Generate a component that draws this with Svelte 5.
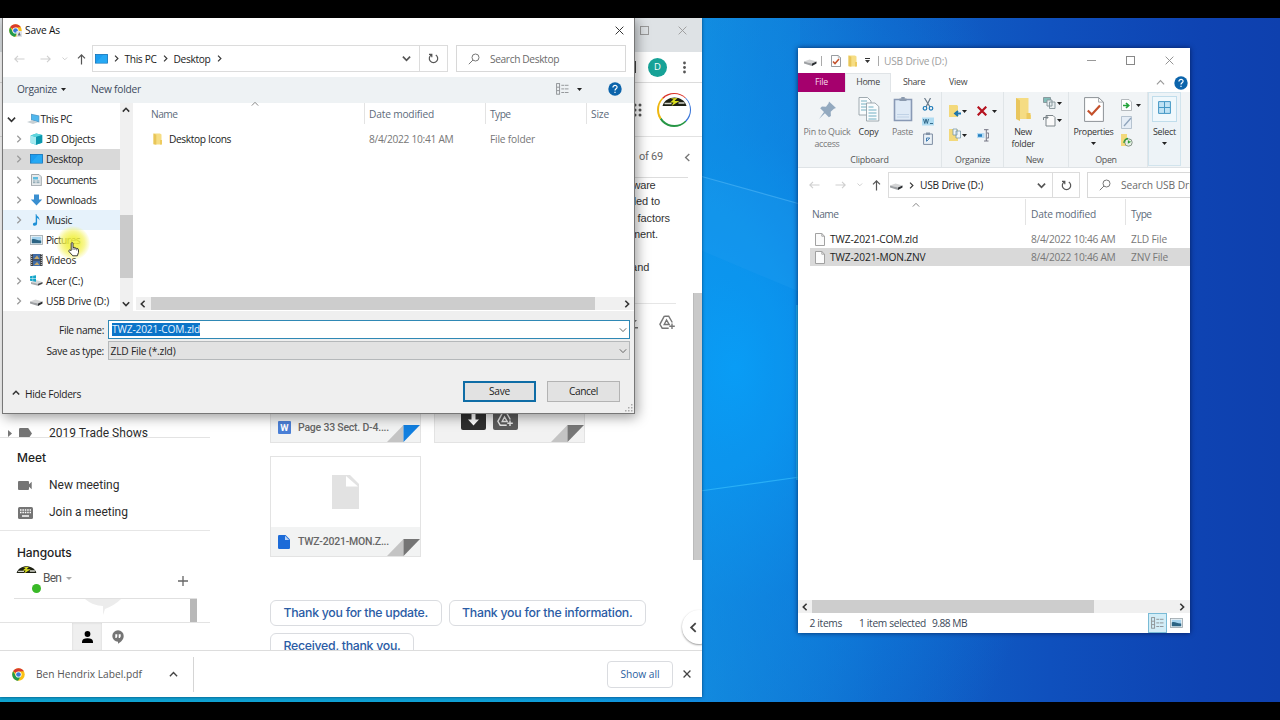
<script>
  // Spreads a label's letters so that it takes the given width in pixels.
  function fit(node, width) {
    const natural = node.getBoundingClientRect().width;
    node.style.letterSpacing = (width - natural) / node.textContent.length + 'px';
  }

  const tree = [
    { icon: 'cube', label: '3D Objects', w: 49 },
    { icon: 'monitor', label: 'Desktop', w: 37, state: 'selected' },
    { icon: 'document', label: 'Documents', w: 50.5 },
    { icon: 'down', label: 'Downloads', w: 50.5 },
    { icon: 'music', label: 'Music', w: 26, state: 'hover' },
    { icon: 'picture', label: 'Pictures', w: 34 },
    { icon: 'video', label: 'Videos', w: 30 },
    { icon: 'windrive', label: 'Acer (C:)', w: 37 },
    { icon: 'drive', label: 'USB Drive (D:)', w: 63 }
  ];

  const files = [
    { name: 'TWZ-2021-COM.zld', w: 88, type: 'ZLD File', tw: 36 },
    { name: 'TWZ-2021-MON.ZNV', w: 95.5, type: 'ZNV File', tw: 37, selected: true }
  ];

  const message = [
    { text: 'ware', w: 23, x: 632.5 },
    { text: 'ded to', w: 30, x: 630 },
    { text: 'factors', w: 32.5, x: 637.5 },
    { text: 'ment.', w: 27, x: 631 },
    { text: '', w: 0, x: 630 },
    { text: 'and', w: 18.5, x: 631 }
  ];
</script>

{#snippet t(text, w, cls = '')}<span class="t {cls}" use:fit={w}>{text}</span>{/snippet}

{#snippet chev(dir, size = 7, color = '#333', sw = 1.3)}
  <svg class="i" width={size} height={size} viewBox="0 0 8 8" fill="none" stroke={color} stroke-width={sw}>
    {#if dir === 'right'}<path d="M2.3 .8 5.6 4 2.3 7.2" />
    {:else if dir === 'left'}<path d="M5.6 .8 2.3 4 5.6 7.2" />
    {:else if dir === 'up'}<path d="M.8 5.6 4 2.3 7.2 5.6" />
    {:else}<path d="M.8 2.3 4 5.6 7.2 2.3" />{/if}
  </svg>
{/snippet}

{#snippet caret(color = '#222')}
  <svg class="i" width="5" height="3" viewBox="0 0 5 3"><path d="M0 0h5L2.5 3z" fill={color} /></svg>
{/snippet}

{#snippet cross(size, color, sw = 1)}
  <svg class="i" width={size} height={size} viewBox="0 0 10 10" stroke={color} stroke-width={sw}><path d="M.7.7 9.3 9.3M9.3.7.7 9.3" /></svg>
{/snippet}

{#snippet chrome(badge = false)}
  <svg class="i" width="13" height="13" viewBox="0 0 26 26">
    <circle cx="13" cy="13" r="12.5" fill="#fbc116" />
    <path d="M13 13 2.2 6.7A12.5 12.5 0 0 1 23.8 6.7L13 7z" fill="#d93a2e" />
    <path d="M13 13 7.8 16 2.2 6.7A12.5 12.5 0 0 0 12 25.5L18 16z" fill="#229a4b" />
    <circle cx="13" cy="13" r="6.2" fill="#fff" /><circle cx="13" cy="13" r="4.7" fill="#3b78d8" />
    {#if badge}<rect x="15" y="14" width="11" height="12" fill="#dfe3e8" /><path d="M20.500 16 23.500 23h-6z" fill="#667" />{/if}
  </svg>
{/snippet}

{#snippet icon(name)}
  {#if name === 'drive'}
    <svg class="i" width="13" height="12" viewBox="0 0 13 12"><path d="M0 6.500 5.500 4.500 12.500 6.500 8 8.500z" fill="#d3d4d5" /><path d="M0 6.500 8 8.500v2.500L0 8.500z" fill="#9ea1a4" /><path d="M8 8.500 12.500 6.500v2L8 11z" fill="#2b2e31" /></svg>
  {:else if name === 'windrive'}
    <svg class="i" width="13" height="12" viewBox="0 0 13 12"><path d="M1 7 6 5 12.500 7 8 8.800z" fill="#d5d8da" /><path d="M1 7 8 8.800v2L1 9z" fill="#a9adb0" /><path d="M8 8.800 12.500 7v1.700L8 10.800z" fill="#484b4e" /><path d="M0 1.300 2.700.8v2.500H0zM3.100.8 6 .3v3H3.100zM0 3.700h2.700v2.500L0 5.700zM3.100 3.700H6v3L3.100 6.200z" fill="#12a5c9" /></svg>
  {:else if name === 'monitor'}
    <svg class="i" width="13" height="12" viewBox="0 0 13 12"><rect x=".5" y="1.500" width="12" height="8.600" fill="#1b9df0" stroke="#0e72b8" stroke-width=".8" /><path d="M1 10 8 2h4v8z" fill="#2eb0f7" opacity=".6" /></svg>
  {:else if name === 'pc'}
    <svg class="i" width="13" height="12" viewBox="0 0 13 12"><path d="M4 .8 12.300 2.500v7L4 7.200z" fill="#5b9fc9" /><path d="M4.800 1.800 11.500 3.200v5L4.800 6.500z" fill="#4fb7ee" /><path d="M0 9 5 7.300l6 2L6 11z" fill="#c8d0d4" /></svg>
  {:else if name === 'cube'}
    <svg class="i" width="13" height="12" viewBox="0 0 13 12"><path d="M.7 2.500 6.300.5l5.900 1.500v7.800L6 11.800.7 10z" fill="#19b3c7" /><path d="M.7 2.500 6 4v7.800L.7 10z" fill="#a5eaf0" /><path d="M.7 2.500 6.300.5l5.900 1.500L6 4z" fill="#5ed5dd" /><path d="M6 4l6.200-2v7.800L6 11.800z" fill="#0c97ad" /></svg>
  {:else if name === 'document'}
    <svg class="i" width="13" height="12" viewBox="0 0 13 12"><path d="M1.500.5h7.500l2.300 2.300v8.900H1.500z" fill="#e6eaec" stroke="#8a9499" stroke-width=".8" /><path d="M3 3h5v2.500H3z" fill="#5dbce0" /><path d="M3 7h2.500M3 8.700h2.500M6.500 7h3M6.500 8.700h3" stroke="#7797a5" stroke-width=".9" /></svg>
  {:else if name === 'down'}
    <svg class="i" width="13" height="12" viewBox="0 0 13 12"><path d="M4 .5h5v5h3.200L6.500 11.500.8 5.500H4z" fill="#3a8fd0" /></svg>
  {:else if name === 'music'}
    <svg class="i" width="13" height="12" viewBox="0 0 13 12"><path d="M6.300 0c.3 2.500 3.700 2.600 3 6.400-.3-1.500-1.400-2.200-2.200-2.500v5.700c0 2.700-4.200 2.900-4.200.7 0-1.500 1.700-2.200 2.800-1.800V0z" fill="#1e90d6" /></svg>
  {:else if name === 'picture'}
    <svg class="i" width="13" height="12" viewBox="0 0 13 12"><rect x=".5" y="1.500" width="12" height="9" fill="#eef2f4" stroke="#9aa5ab" stroke-width=".8" /><path d="M1.800 2.800h9.400v6.400H1.800z" fill="#a5d3ee" /><path d="M1.800 5.500c3-1.300 5 1.200 9.400 1v2.700H1.800z" fill="#2c6484" /></svg>
  {:else if name === 'video'}
    <svg class="i" width="13" height="12" viewBox="0 0 13 12"><rect x=".5" y="0" width="12" height="12" fill="#3b3f44" /><path d="M3 0h7v5.600H3zM3 6.400h7V12H3z" fill="#3f6ba6" /><path d="M4 5 7 1.500 9.500 5zM4 11l3-3 2.500 3z" fill="#c5a86a" /><path d="M1.700 0v12M11.300 0v12" stroke="#dfe3e6" stroke-dasharray="1 1" stroke-width=".9" /></svg>
  {:else if name === 'folder'}
    <svg class="i" width="9" height="12" viewBox="0 0 9 12"><path d="M.5.500h6.500l1.500 1v10H.5z" fill="#f6dd84" /><path d="M.5.500 3.300 1.700V11.700L.5 11z" fill="#e8c559" /><path d="M7 7h2v4.500H7z" fill="#eecb60" /></svg>
  {:else if name === 'file'}
    <svg class="i" width="10" height="13" viewBox="0 0 10 13"><path d="M.5.500h6.300l2.700 2.700v9.300H.5z" fill="#fbfbfb" stroke="#979797" stroke-width=".9" /><path d="M6.800.5v2.700h2.700" fill="none" stroke="#979797" stroke-width=".8" /></svg>
  {:else if name === 'search'}
    <svg class="i" width="12" height="12" viewBox="0 0 12 12" fill="none" stroke="#777" stroke-width="1"><circle cx="7.500" cy="4.500" r="3.500" /><path d="M5 7 .8 11.200" /></svg>
  {:else if name === 'refresh'}
    <svg class="i" width="11" height="11" viewBox="0 0 11 11" fill="none" stroke="#555" stroke-width="1.200"><path d="M7.800 1.900A4.200 4.200 0 1 1 3.200 1.900M3.800 4.200V1.300H1" /></svg>
  {:else if name === 'help'}
    <svg class="i" width="14" height="14" viewBox="0 0 14 14"><circle cx="7" cy="7" r="6.700" fill="#0c64ab" /><path d="M4.900 5.500c0-2.900 4.300-2.700 4.200-.2C9 6.800 7 6.900 7 8.500M7 9.700v1.400" stroke="#fff" stroke-width="1.200" fill="none" /></svg>
  {:else if name === 'arrows'}
    <svg class="i" width="74" height="12" viewBox="0 0 74 12" fill="none" stroke="#cfcfcf" stroke-width="1.100"><path d="M10.500 6H.8M4 2.800.8 6 4 9.200M26.500 6h9.700M33 2.800 36.200 6 33 9.200" /><path d="M48.500 4.500l2.300 2.300 2.300-2.300" stroke-width="1" /><path d="M67.500 11.500V1.800M64 5.300 67.500 1.800 71 5.300" stroke="#555" stroke-width="1.200" /></svg>
  {:else if name === 'details'}
    <svg class="i" width="13" height="12" viewBox="0 0 13 12" fill="none" stroke="#8b8f92" stroke-width=".9"><rect x=".6" y=".6" width="3" height="10.600" /><path d="M1 4.200h2.500M1 7.600h2.500M5.300 2.300h3M9 2.300h3.500M5.300 5.900h3M9 5.900h3.500M5.300 9.500h3M9 9.500h3.500" /></svg>
  {:else if name === 'check'}
    <svg class="i" width="10" height="12" viewBox="0 0 20 24"><path d="M1 1h13.500L19 5.500V23H1z" fill="#fdfdfd" stroke="#777c82" stroke-width="1.500" /><path d="M14.500 1v4.500H19" fill="none" stroke="#8c9196" /><path d="m4 13 4 4.200L16 8" fill="none" stroke="#c4502b" stroke-width="3" /></svg>
  {:else if name === 'drivesave'}
    <svg class="i" width="17" height="15" viewBox="0 0 17 15" fill="none" stroke="currentColor" stroke-width="1.400"><path d="M5.300 1.200h4.400l3.600 6.300M5.300 1.200.9 9.300l2.300 3.900h6.500M7.500 5 5.200 9.500h5L7.500 5z" /><path d="M13 8.500v5.500M10.300 11.200h5.500" /></svg>
  {/if}
{/snippet}

{#snippet logo(w)}
  <svg class="i" width={w} height={w * 0.36} viewBox="0 0 24 9"><path d="M0 9C3-2.500 21-2.500 24 9z" fill="#1d2014" /><path d="M2 6.500h7M16 6h6" stroke="#d6d6cc" stroke-width="1.600" /><path d="M8 1.500 15 1l-3 3h5L9 9l2-3.500H7.500L11 2.500z" fill="#dbe020" /></svg>
{/snippet}

{#snippet corner(color)}
  <svg class="corner" width="33" height="17" viewBox="0 0 33 17"><path d="M0 17 16.500 0v17z" fill="#c4c4c4" /><path d="M16.500 0H33L16.500 17z" fill={color} /></svg>
{/snippet}

<div class="screen">
  <div class="desktop">
    <svg class="beams" width="1280" height="684" viewBox="0 18 1280 684">
      <path d="M700 176 800 204V292L700 250z" fill="#37a8f5" opacity=".16" />
      <path d="M700 491 800 477V18L700 18z" fill="#0aa6ff" opacity=".10" />
      <path d="M700 176 800 204" stroke="#55baf8" stroke-width="1.200" opacity=".55" />
      <path d="M700 491 800 477" stroke="#3dc4ff" stroke-width="1.200" opacity=".6" />
      <path d="M797 305V480" stroke="#32d0ff" stroke-width="1.500" opacity=".8" />
    </svg>

    <!-- Browser -->
    <section class="browser">
      <div class="strip">
        <svg class="i" width="9" height="9" viewBox="0 0 9 9"><rect x=".5" y=".5" width="8" height="8" fill="none" stroke="#999" /></svg>
        {@render cross(9, '#999')}
      </div>
      <div class="tools">
        <i class="ext"></i>
        <span class="face">{@render t('D', 7)}</span>
        <svg class="i" width="3" height="13" viewBox="0 0 3 13" fill="#555"><circle cx="1.500" cy="2" r="1.400" /><circle cx="1.500" cy="6.500" r="1.400" /><circle cx="1.500" cy="11" r="1.400" /></svg>
      </div>
      <div class="mailhead">
        <svg class="i" width="14" height="14" viewBox="0 0 14 14" fill="#555">
          {#each [2, 7, 12] as y}{#each [2, 7, 12] as x}<circle cx={x} cy={y} r="1.500" />{/each}{/each}
        </svg>
        <span class="ring"><span class="inner">{@render logo(25)}</span></span>
      </div>
      <div class="main">
        <aside>
          <div class="labels">
            <div class="label">
              <svg class="i" width="4" height="7" viewBox="0 0 4 7"><path d="M0 0l4 3.500L0 7z" fill="#777" /></svg>
              <svg class="i" width="13" height="11" viewBox="0 0 13 11"><path d="M1.200 0h8L13 5.500 9.200 11h-8Q0 11 0 9.800V1.200Q0 0 1.200 0z" fill="#757575" /></svg>
              {@render t('2019 Trade Shows', 99)}
            </div>
          </div>
          <div class="meet">
            <h3>{@render t('Meet', 29)}</h3>
            <div class="entry">
              <svg class="i" width="15" height="9" viewBox="0 0 15 9"><path d="M1 0h9q1 0 1 1v2.300L13.700.8v7.400L11 5.700V8q0 1-1 1H1Q0 9 0 8V1q0-1 1-1z" fill="#757575" /></svg>
              {@render t('New meeting', 70.5)}
            </div>
            <div class="entry">
              <svg class="i" width="15" height="12" viewBox="0 0 15 12"><rect width="15" height="12" rx="1.500" fill="#757575" /><path d="M2 3h11M2 5.500h11" stroke="#fff" stroke-width="1.400" stroke-dasharray="1.500 .9" /><path d="M4 9h7" stroke="#fff" stroke-width="1.500" /></svg>
              {@render t('Join a meeting', 79)}
            </div>
          </div>
          <div class="hangouts">
            <h3>{@render t('Hangouts', 54.5)}</h3>
            <div class="person">
              <span class="pic">{@render logo(21)}<i class="online"></i></span>
              {@render t('Ben', 18)}
              <svg class="i" width="6" height="3" viewBox="0 0 6 3"><path d="M0 0h6L3 3z" fill="#aaa" /></svg>
              <svg class="i plus" width="10" height="10" viewBox="0 0 10 10"><path d="M5 0v10M0 5h10" stroke="#666" stroke-width="1.300" /></svg>
            </div>
            <div class="chats">
              <svg class="i" width="36" height="17" viewBox="0 0 36 17"><path d="M0 0h36Q30 6 20 10L18 16V7Q8 7 0 0z" fill="#ececec" /></svg>
              <i class="bar"></i>
            </div>
          </div>
          <div class="tabs">
            <span class="tab on"><svg class="i" width="11" height="12" viewBox="0 0 11 12"><circle cx="5.500" cy="3" r="2.900" /><path d="M0 12V10.500Q.5 7.300 5.500 7.300T11 10.500V12z" /></svg></span>
            <span class="tab"><svg class="i" width="12" height="14" viewBox="0 0 12 14"><path d="M6 .3a5.600 5.600 0 0 1 5.700 5.700C11.700 9.500 9 12 6 13.700v-2A5.700 5.700 0 0 1 6 .3z" fill="#757575" /><path d="M3.300 4.300h2v2.200L4.500 8H3.300zM6.700 4.300h2v2.200L7.900 8H6.700z" fill="#fff" /></svg></span>
          </div>
        </aside>

        <article>
          <div class="pager">{@render t('of 69', 24)}<div class="fold">{@render chev('left', 9, '#777', 1.2)}</div></div>
          <div class="message">
            {#each message as line}
              <p style="padding-left: {line.x - 210}px">{#if line.text}{@render t(line.text, line.w)}{/if}</p>
            {/each}
          </div>
          <div class="attachhead">
            <svg class="i" width="11" height="13" viewBox="0 0 11 13"><path d="M4 0h3v4h3L5.500 9 1 4h3zM0 11h11v1.500H0z" fill="#777" /></svg>
            {@render icon('drivesave')}
          </div>
          <div class="cards">
            <div class="card">
              <div class="preview"></div>
              <div class="caption">
                <span class="word">W</span>{@render t('Page 33 Sect. D-4....', 91)}{@render corner('#117fe0')}
              </div>
            </div>
            <div class="card hovered">
              <div class="preview actions">
                <span class="act dark"><svg class="i" width="11" height="12" viewBox="0 0 11 12"><path d="M3.500 0h4v5.500H11L5.500 11.500 0 5.500h3.500z" fill="#fff" /></svg></span>
                <span class="act">{@render icon('drivesave')}</span>
              </div>
              <div class="caption">{@render corner('#777')}</div>
            </div>
            <div class="card">
              <div class="preview"><svg class="i" width="27" height="34" viewBox="0 0 27 34"><path d="M0 0h18l9 9v25H0z" fill="#e2e2e2" /><path d="M14 1v10.500h12z" fill="#fff" /></svg></div>
              <div class="caption">
                <svg class="i fileglyph" width="12" height="14" viewBox="0 0 12 14"><path d="M1.200 0H7.500L12 4.500V12.800Q12 14 10.800 14H1.200Q0 14 0 12.800V1.200Q0 0 1.200 0z" fill="#1c6bd8" /><path d="M7 .8V5h4.200z" fill="#b9d3f7" /></svg>
                {@render t('TWZ-2021-MON.Z...', 91)}{@render corner('#757575')}
              </div>
            </div>
          </div>
          <div class="replies">
            <button>{@render t('Thank you for the update.', 144.5)}</button>
            <button>{@render t('Thank you for the information.', 170.5)}</button>
            <button>{@render t('Received, thank you.', 117)}</button>
          </div>
        </article>
        <div class="vscroll"><i></i></div>
        <span class="panel">{@render chev('left', 11, '#444', 1.3)}</span>
      </div>
      <div class="downloads">
        <div class="download">{@render chrome()}{@render t('Ben Hendrix Label.pdf', 106)}<div class="more">{@render chev('up', 9, '#444', 1.2)}</div></div>
        <button>{@render t('Show all', 39)}</button>
        {@render cross(8, '#444', 1.6)}
      </div>
    </section>

    <!-- Save dialog -->
    <section class="dialog">
      <div class="dtitle">{@render chrome(true)}{@render t('Save As', 35)}<div class="close">{@render cross(9, '#333', 1.1)}</div></div>
      <div class="dnav">
        <span class="nav">{@render icon('arrows')}</span>
        <div class="address">
          {@render icon('monitor')}<b></b>{@render chev('right')}<b></b>{@render t('This PC', 32)}<b></b>{@render chev('right')}<b></b>{@render t('Desktop', 37)}<b></b>{@render chev('right')}
          <span class="end">{@render chev('down', 9, '#555', 1.5)}</span>
          <span class="reload">{@render icon('refresh')}</span>
        </div>
        <div class="search">{@render icon('search')}{@render t('Search Desktop', 69)}</div>
      </div>
      <div class="dbar">
        {@render t('Organize', 40)}<span class="c1">{@render caret()}</span>{@render t('New folder', 50)}
        <span class="view">{@render icon('details')}{@render caret()}{@render icon('help')}</span>
      </div>
      <div class="dbody">
        <div class="tree">
          <div class="node root">{@render chev('down', 9, '#333', 1.4)}{@render icon('pc')}{@render t('This PC', 31.5)}</div>
          {#each tree as n}
            <div class="node {n.state ?? ''}">{@render chev('right', 8, '#999', 1.2)}{@render icon(n.icon)}{@render t(n.label, n.w)}</div>
          {/each}
        </div>
        <div class="tscroll">{@render chev('up', 8, '#333', 1.6)}<i></i>{@render chev('down', 8, '#333', 1.6)}</div>
        <div class="dlist">
          <div class="cols">
            <div class="cell">{@render t('Name', 26.5)}</div><div class="cell">{@render t('Date modified', 65)}</div><div class="cell">{@render t('Type', 20.5)}</div><div class="cell">{@render t('Size', 18)}</div>
            <em>{@render chev('up', 8, '#888', 1)}</em>
          </div>
          <div class="row"><div>{@render icon('folder')}{@render t('Desktop Icons', 62, 'black')}</div><div>{@render t('8/4/2022 10:41 AM', 84.5)}</div><div>{@render t('File folder', 45)}</div></div>
          <div class="hscroll">{@render chev('left', 8, '#333', 1.6)}<i></i>{@render chev('right', 8, '#333', 1.6)}</div>
        </div>
      </div>
      <div class="dfoot">
        <div class="field"><label for="fname">{@render t('File name:', 45)}</label><div class="input" id="fname"><mark>{@render t('TWZ-2021-COM.zld', 88)}</mark><div class="drop">{@render chev('down', 8, '#666', 1)}</div></div></div>
        <div class="field"><label for="ftype">{@render t('Save as type:', 57.5)}</label><div class="input combo" id="ftype">{@render t('ZLD File (*.zld)', 65)}<div class="drop">{@render chev('down', 8, '#666', 1)}</div></div></div>
        <div class="dactions">
          {@render chev('up', 8, '#333', 1.5)}{@render t('Hide Folders', 56)}
          <button class="primary">{@render t('Save', 21)}</button><button>{@render t('Cancel', 29)}</button>
        </div>
        <svg class="grip" width="8" height="8" viewBox="0 0 8 8" fill="#aaa"><path d="M6 0h1.500v1.500H6zM6 3h1.500v1.500H6zM6 6h1.500v1.500H6zM3 3h1.500v1.500H3zM3 6h1.500v1.500H3zM0 6h1.500v1.500H0z" /></svg>
      </div>
    </section>

    <!-- Explorer -->
    <section class="explorer">
      <div class="etitle">
        {@render icon('drive')}<i></i>{@render icon('check')}{@render icon('folder')}
        <svg class="i" width="5" height="5" viewBox="0 0 5 5"><path d="M0 0h5v1H0zM0 2h5L2.500 5z" fill="#333" /></svg><i></i>{@render t('USB Drive (D:)', 63)}
        <span class="wbtns">
          <svg class="i" width="9" height="9" viewBox="0 0 9 9"><path d="M0 4.500h9" stroke="#999" /></svg>
          <svg class="i" width="9" height="9" viewBox="0 0 9 9"><rect x=".5" y=".5" width="8" height="8" fill="none" stroke="#888" /></svg>
          {@render cross(9, '#888')}
        </span>
      </div>
      <div class="etabs">
        <span class="filetab">{@render t('File', 13)}</span><span class="home">{@render t('Home', 23.5)}</span><span class="share">{@render t('Share', 22)}</span><span class="viewtab">{@render t('View', 18.5)}</span>
        <span class="ehelp">{@render chev('up', 9, '#999', 1)}{@render icon('help')}</span>
      </div>
      <div class="ribbon">
        <div class="group clip">
          <div class="items">
            <div class="big dim pin">
              <svg class="i" width="34" height="30" viewBox="0 0 34 30"><g transform="translate(6 2)"><path d="M13 4.500 20 11l-2 .8-3.300 3 .2 4.200-2 1.300-4-4L3 22l5-7L4.200 11.300 6 9.500l4 .3 2.600-3.500z" fill="#93a9bf" /></g></svg>
              {@render t('Pin to Quick', 47)}{@render t('access', 25)}
            </div>
            <div class="big copy">
              <svg class="i" width="22" height="30" viewBox="0 0 22 30" fill="#fafcfd" stroke="#8b979e" stroke-width=".8"><path d="M1 2.500h8.500L13 6v14H1z" /><path d="M3 6h6M3 9h8M3 12h8M3 15h8" stroke="#55a0b3" /><path d="M8.500 8H17l3.800 3.500V26H8.500z" /><path d="M10.500 12h5M10.500 15h8M10.500 18h8M10.500 21h8M10.500 24h8" stroke="#4c9db4" /></svg>
              {@render t('Copy', 20)}
            </div>
            <div class="big dim paste">
              <svg class="i" width="20" height="30" viewBox="0 0 20 30"><path d="M1.500 4.500h17v21h-17z" fill="#dfeaf6" stroke="#8999b5" stroke-width="1.600" /><path d="M6.500 6V3.500h1.800V2h3.400v1.500h1.800V6z" fill="#8b9aae" /><path d="M4 19.500h12M4 22h12" stroke="#c0d2e6" /></svg>
              {@render t('Paste', 21)}
            </div>
            <div class="smalls">
              <svg class="i" width="12" height="13" viewBox="0 0 12 13" fill="none"><path d="M2.500 0 8 9M8.500 0 4 9" stroke="#6a7b8a" stroke-width="1.200" /><circle cx="3" cy="10.300" r="1.800" stroke="#1d7ab8" stroke-width="1.200" /><circle cx="9" cy="10.300" r="1.800" stroke="#1d7ab8" stroke-width="1.200" /></svg>
              <svg class="i" width="12" height="9" viewBox="0 0 12 9"><path d="M0 .5h12v8H0z" fill="#b0dcf2" /><path d="m1.500 2 1.300 4.500L4 2l1.300 4.500L6.500 2M8 6.500h3" fill="none" stroke="#285f80" stroke-width=".9" /></svg>
              <svg class="i" width="10" height="13" viewBox="0 0 10 13"><path d="M.6 2h8.800v10.400H.6z" fill="#eaf1f7" stroke="#7e8da3" /><path d="M3 .5h4V3H3z" fill="#8292a6" /><path d="M3.500 9.500V6h3.300L4 9" fill="none" stroke="#417cb2" /></svg>
            </div>
          </div>
          <div class="gl">{@render t('Clipboard', 38.5)}</div>
        </div>
        <div class="group org">
          <div class="items quad">
            <span><svg class="i" width="12" height="14" viewBox="0 0 12 14"><path d="M0 1h8l1 1v11H0z" fill="#f3d97b" /><path d="M12 9.500H7.500M9 7 6 9.500 9 12" stroke="#1c75ad" stroke-width="1.800" fill="none" /></svg>{@render caret()}</span>
            <span>{@render cross(10, '#b5121f', 2.2)}{@render caret()}</span>
            <span><svg class="i" width="12" height="14" viewBox="0 0 12 14"><path d="M0 1h8l1 1v11H0z" fill="#f3d97b" /><path d="M4 1h4v6H4zM7 3h4.500v7H7z" fill="#eff5f9" stroke="#6d8fa2" stroke-width=".7" /></svg>{@render caret()}</span>
            <span><svg class="i" width="12" height="13" viewBox="0 0 12 13"><path d="M0 4h7.500v5H0z" fill="#b6dbf3" /><path d="M1 5.200h4v2.600H1z" fill="#247fc0" /><path d="M7 .7h4.500M7 12h4.500M9.300.7V12M10 4h1.700v5H10" fill="none" stroke="#667" stroke-width=".9" /></svg></span>
          </div>
          <div class="gl">{@render t('Organize', 35)}</div>
        </div>
        <div class="group new">
          <div class="items">
            <div class="big">
              <svg class="i" width="17" height="30" viewBox="0 0 17 30"><path d="M1 3h12.500v16L16 20v4H1z" fill="#f5dc83" /><path d="M1 3 5 5.500V26L1 24z" fill="#e9c65e" /><path d="M11.500 18h4v6h-4z" fill="#ecc95e" /></svg>
              {@render t('New', 17.5)}{@render t('folder', 23)}
            </div>
            <div class="stack">
              <span><svg class="i" width="13" height="12" viewBox="0 0 13 12" fill="#e8eef0" stroke="#859399" stroke-width=".9"><path d="M.5.5h7v5h-7z" fill="#81bdb8" /><path d="M4 3h5v6H4zM6.500 5h5.500v6.500H6.500z" /></svg>{@render caret()}</span>
              <span><svg class="i" width="13" height="13" viewBox="0 0 13 13" fill="#fafafa" stroke="#7c858a" stroke-width="1"><path d="M3 1.500h7l2 2V12H3z" /><path d="M.5 6V3.500H5M3.500 2 5 3.500 3.500 5" fill="none" /></svg>{@render caret()}</span>
            </div>
          </div>
          <div class="gl">{@render t('New', 17.5)}</div>
        </div>
        <div class="group open">
          <div class="items">
            <div class="big">
              <svg class="i" width="20" height="30" viewBox="0 0 20 30"><path d="M.6 2.600h14l4.800 4.500v19.300H.6z" fill="#fff" stroke="#8c9196" /><path d="M14.600 2.600v4.500h4.800" fill="none" stroke="#8c9196" stroke-width=".8" /><path d="m3.800 15.500 4 4L16 10.500" fill="none" stroke="#c4502b" stroke-width="2.200" /></svg>
              {@render t('Properties', 40)}<span class="cc">{@render caret()}</span>
            </div>
            <div class="stack three">
              <span><svg class="i" width="11" height="12" viewBox="0 0 11 12"><path d="M.5.500H8L10.500 3v8.500H.5z" fill="#fff" stroke="#a3aaae" stroke-width=".8" /><path d="M2 6.500h5M5 4l2.700 2.500L5 9" stroke="#24a33a" stroke-width="1.700" fill="none" /></svg>{@render caret()}</span>
              <span><svg class="i" width="11" height="13" viewBox="0 0 11 13"><path d="M.5.500h10v12H.5z" fill="#e5edf6" stroke="#a8b7c7" stroke-width=".8" /><path d="m3 10 7-8" stroke="#8ea4bc" stroke-width="1.300" /></svg></span>
              <span><svg class="i" width="12" height="13" viewBox="0 0 12 13"><path d="M0 0h6v12H0z" fill="#f3d97b" /><circle cx="7.500" cy="8.500" r="3.700" fill="#e9efe9" stroke="#7b8c7e" stroke-width=".9" /><path d="M3 9a4 4 0 0 1 4-4.500M7.500 6.500v2.200L9.500 7.500" stroke="#2f9b38" stroke-width="1.300" fill="none" /></svg></span>
            </div>
          </div>
          <div class="gl">{@render t('Open', 21.5)}</div>
        </div>
        <div class="group select">
          <div class="selbox"><svg class="i" width="13" height="13" viewBox="0 0 13 13" fill="#bfe2f4" stroke="#4497c4" stroke-width="1"><path d="M.6.6h5.900v5.900H.6zM6.500.6h5.900v5.900H6.500zM.6 6.500h5.900v5.900H.6zM6.500 6.500h5.900v5.900H6.500z" /></svg></div>
          {@render t('Select', 23)}<span class="cc">{@render caret()}</span>
        </div>
      </div>
      <div class="enav">
        <span class="nav">{@render icon('arrows')}</span>
        <div class="address">
          {@render icon('drive')}<b></b>{@render chev('right')}<b></b>{@render t('USB Drive (D:)', 63)}
          <span class="end">{@render chev('down', 9, '#555', 1.5)}</span>
          <span class="reload">{@render icon('refresh')}</span>
        </div>
        <div class="search">{@render icon('search')}{@render t('Search USB Drive (D:)', 100)}</div>
      </div>
      <div class="elist">
        <div class="cols">
          <div class="cell">{@render t('Name', 26.5)}</div><div class="cell">{@render t('Date modified', 65)}</div><div class="cell">{@render t('Type', 20.5)}</div>
          <em>{@render chev('up', 8, '#888', 1)}</em>
        </div>
        {#each files as f}
          <div class="row" class:selected={f.selected}><div>{@render icon('file')}{@render t(f.name, f.w, 'black')}</div><div>{@render t('8/4/2022 10:46 AM', 84.5)}</div><div>{@render t(f.type, f.tw)}</div></div>
        {/each}
      </div>
      <div class="hscroll">{@render chev('left', 8, '#333', 1.6)}<i></i>{@render chev('right', 8, '#333', 1.6)}</div>
      <div class="status">
        {@render t('2 items', 32.5)}{@render t('1 item selected', 67)}{@render t('9.88 MB', 35)}
        <span class="mode on">{@render icon('details')}</span><span class="mode">{@render icon('picture')}</span>
      </div>
    </section>

    <div class="glow"></div>
    <svg class="hand" width="12" height="15" viewBox="0 0 12 15"><path d="M3.200 8.500V1.600Q3.200.6 4.100.6T5 1.600V5.500q1.600-.7 1.900.6 1.500-.6 1.800.5 1.800-.3 1.800 1.200v2.600L9.300 13.800H4.800L1 9.600Q.4 8.300 1.500 8z" fill="#fff" stroke="#222" stroke-width=".9" /><path d="M5 5.500v2.500M6.900 6v2M8.700 6.600V8.500" stroke="#333" stroke-width=".7" /></svg>
  </div>
</div>

<style>
  :global(body) { margin: 0; background: #000; }
  .screen { width: 1280px; height: 720px; background: #000; padding: 18px 0; box-sizing: border-box; overflow: hidden; font: 10.2px/14px "Open Sans", "Noto Sans", sans-serif; color: #222; }
  .screen :is(div, section, span, aside, article, button, p) { box-sizing: border-box; }
  .desktop { position: relative; width: 1280px; height: 684px; overflow: hidden; background: radial-gradient(ellipse 330px 520px at 735px 350px, rgba(8, 160, 250, .85), rgba(10, 140, 235, .5) 45%, transparent 100%), linear-gradient(90deg, #0fa3cf 0, #0f9fd6 45%, #1688d8 55%, #1065c9 69%, #0f50bd 82%, #0e43b2 94%, #0e40ae 100%); }
  .beams { position: absolute; inset: 0; }
  .i { display: block; flex: none; }
  .t { display: inline-block; white-space: pre; flex: none; }
  button { font: inherit; margin: 0; padding: 0; display: flex; align-items: center; justify-content: center; }

  .browser { position: absolute; left: 0; top: 0; width: 702px; height: 679px; background: #fff; display: flex; flex-direction: column; box-shadow: 0 0 3px rgba(0, 40, 80, .75); overflow: hidden; }
  .strip { height: 34px; background: #dee2e5; display: flex; justify-content: flex-end; gap: 29px; padding: 8px 15px 0 0; flex: none; }
  .tools { height: 31px; flex: none; border-bottom: 1px solid #dcdcdc; display: flex; justify-content: flex-end; align-items: center; padding-right: 16px; }
  .ext { width: 12px; height: 12px; background: #444; margin-right: 12px; }
  .face { width: 19px; height: 19px; border-radius: 50%; background: #17a297; color: #fff; display: flex; justify-content: center; align-items: center; font-size: 9.500px; margin-right: 16px; }
  .mailhead { height: 54px; flex: none; border-bottom: 1px solid #e2e2e2; display: flex; justify-content: flex-end; align-items: center; padding-right: 11px; gap: 15px; }
  .ring { width: 34px; height: 34px; border-radius: 50%; padding: 1.500px; background: conic-gradient(from -45deg, #d93025 0 25%, #3572d8 25% 50%, #269645 50% 78%, #eeb711 78% 100%); }
  .inner { display: flex; width: 31px; height: 31px; border-radius: 50%; background: #fff; justify-content: center; padding-top: 2.500px; }
  .main { height: 513px; flex: none; display: flex; position: relative; overflow: hidden; }
  aside { width: 210px; flex: none; display: flex; flex-direction: column; font: 12px/27px Roboto, sans-serif; color: #2c2c2c; }
  .labels { height: 301px; padding-top: 283px; overflow: hidden; border-bottom: 1px solid #e3e3e3; box-sizing: border-box; flex: none; }
  .label { display: flex; align-items: center; height: 27px; padding-left: 8px; }
  .label svg:nth-child(2) { margin: 0 17px 0 7px; }
  h3 { margin: 0; font: 500 12px/27px Inter, sans-serif; color: #222; padding-left: 17px; height: 27px; }
  .meet { height: 93px; padding-top: 7px; border-bottom: 1px solid #e6e6e6; flex: none; }
  .meet h3 { line-height: 26px; }
  .entry { display: flex; align-items: center; height: 27px; padding-left: 18px; gap: 16px; }
  .hangouts { height: 92px; padding-top: 8px; border-bottom: 1px solid #e3e3e3; display: flex; flex-direction: column; flex: none; }
  .person { height: 32px; display: flex; align-items: center; padding-left: 16px; color: #555; gap: 5px; padding-bottom: 7px; flex: none; }
  .pic { width: 22px; height: 24px; position: relative; margin-top: -2px; }
  .online { position: absolute; left: 16px; bottom: -3px; width: 9px; height: 9px; border-radius: 50%; background: #39b927; }
  .plus { margin: 4px 0 0 101px; }
  .chats { margin: 0 13px 0 14px; border-top: 1px solid #e0e0e0; flex: 1; display: flex; justify-content: flex-end; gap: 69px; }
  .bar { width: 7px; background: #b8b8b8; }
  .tabs { height: 28px; display: flex; padding-left: 72px; flex: none; }
  .tab { width: 30px; display: flex; align-items: center; justify-content: center; }
  .tab.on { background: #efefef; box-shadow: inset 0 0 2px #ccc; }
  .tab:nth-child(2) { width: 31px; }

  article { width: 483px; flex: none; }
  .pager { height: 41px; border-bottom: 1px solid #ddd; display: flex; align-items: center; padding-left: 429px; font: 11px/14px Roboto, sans-serif; color: #666; width: 478px; }
  .fold { margin-left: 20px; }
  .message { height: 126px; font: 11px/16.400px "Liberation Sans", Arial, sans-serif; color: #333; border-bottom: 1px solid #e6e6e6; width: 466px; }
  .message p { margin: 0; height: 16.400px; position: relative; top: -1px; }
  .attachhead { height: 36px; display: flex; align-items: center; padding-left: 417px; gap: 21px; color: #777; }
  .cards { display: grid; grid-template-columns: 151px 151px; grid-auto-rows: 101px; gap: 13px; padding: 2px 0 0 60px; }
  .card { border: 1px solid #e3e3e3; display: flex; flex-direction: column; background: #fff; }
  .preview { flex: 1; display: flex; align-items: center; justify-content: center; }
  .caption { height: 29px; flex: none; background: #f2f3f3; display: flex; align-items: center; padding-left: 7px; font: 500 10.500px/14px Roboto, sans-serif; color: #666; position: relative; }
  .word { width: 13px; height: 13px; background: #4a7fd6; color: #fff; font: 700 9.500px/13px Roboto, sans-serif; text-align: center; margin-right: 7px; border-radius: 1px; }
  .fileglyph { margin: 0 8px 0 0; }
  .corner { position: absolute; right: 0; bottom: 0; display: block; }
  .hovered { background: #f2f2f2; }
  .actions { align-items: flex-end; gap: 7px; justify-content: flex-end; padding-right: 66px; height: 87px; flex: none; }
  .hovered .caption { height: auto; flex: 1; background: none; }
  .act { width: 25px; height: 25px; border-radius: 2px; background: #5c5c5c; color: #e8e8e8; display: flex; align-items: center; justify-content: center; padding-top: 4px; }
  .dark { background: #2f2f2f; }
  .replies { display: flex; flex-wrap: wrap; gap: 7px; padding: 43px 30px 0 60px; }
  .replies button { height: 26px; padding: 0 12.500px 1px 12.500px; border: 1px solid #dadce0; border-radius: 6px; background: #fff; color: #2b5ca5; font: 500 12.300px/20px Inter, sans-serif; }
  .vscroll { width: 9px; padding-top: 156px; }
  .vscroll i { display: block; height: 267px; background: #c9c9c9; border-left: 1px solid #bbb; box-sizing: border-box; }
  .panel { position: absolute; left: 682px; top: 473px; width: 34px; height: 34px; border-radius: 50%; background: #fff; box-shadow: 0 1px 2px #999; display: flex; align-items: center; padding-left: 6px; }
  .downloads { flex: 1; background: #fff; border-top: 1px solid #ddd; display: flex; align-items: center; padding-right: 11px; color: #555; }
  .download { width: 194px; height: 35px; border-right: 1px solid #d5d5d5; display: flex; align-items: center; padding-left: 12px; gap: 11px; margin-right: auto; }
  .more { margin-left: 16px; }
  .downloads button { width: 66px; height: 27px; border: 1px solid #dadce0; border-radius: 4px; background: #fff; color: #2a5ea0; margin-right: 10px; font-weight: 500; }

  .dialog { position: absolute; left: 2px; top: -1px; width: 633px; height: 397px; border: 1px solid #777; background: #fff; display: flex; flex-direction: column; box-shadow: 2px 3px 12px rgba(0, 0, 0, .4); }
  .dtitle { height: 24px; margin-bottom: 3px; display: flex; align-items: center; padding-left: 6px; gap: 3px; color: #111; flex: none; }
  .close { margin-left: auto; margin-right: 10px; }
  .dnav, .enav { display: flex; flex: none; }
  .dnav { height: 32px; }
  .nav { display: flex; align-items: center; justify-content: flex-start; flex: none; }
  .dnav .nav { width: 89px; padding-left: 11px; height: 27px; }
  .address { height: 27px; border: 1px solid #dcdcdc; display: flex; align-items: center; padding-left: 2px; color: #222; flex: none; width: 356px; }
  .address b { width: 5px; flex: none; }
  .dnav .address b:nth-of-type(1) { width: 4.500px; }
  .address .end { margin-left: auto; width: 23px; display: flex; justify-content: center; padding-right: 3px; }
  .reload { width: 28px; height: 100%; border-left: 1px solid #dcdcdc; display: flex; align-items: center; justify-content: center; }
  .search { height: 27px; border: 1px solid #d8d8d8; display: flex; align-items: center; padding-left: 11px; gap: 10px; color: #6b6b6b; white-space: nowrap; overflow: hidden; }
  .dnav .search { margin-left: 8px; width: 170px; }
  .dbar { height: 26px; flex: none; background: #eef2f4; display: flex; align-items: center; padding-left: 14px; color: #3c4a5c; padding-bottom: 2px; }
  .c1 { margin: 0 25px 0 4px; }
  .view { margin-left: auto; display: flex; align-items: center; padding-right: 12px; }
  .view :global(svg:nth-child(1)) { margin-right: 8px; }
  .view :global(svg:nth-child(2)) { margin-right: 26px; }
  .dbody { height: 208px; flex: none; display: flex; }
  .tree { width: 117px; padding-top: 6px; background: #fff; overflow: hidden; flex: none; color: #222; }
  .node { height: 20.200px; display: flex; align-items: center; padding-left: 12px; gap: 7px; }
  .node .t { margin-left: -4px; }
  .root { padding-left: 4px; gap: 11px; }
  .root .t { margin-left: -10.500px; }
  .selected { background: #d9d9d9; }
  .hover { background: #e6f2fb; }
  .tscroll { width: 13px; background: #f0f0f0; display: flex; flex-direction: column; align-items: center; padding: 3px 1px 3px 0; flex: none; }
  .tscroll i { width: 13px; height: 63px; background: #cbcbcb; margin: 101px -1px auto 0; }
  .dlist { flex: 1; display: flex; flex-direction: column; padding-left: 3px; }
  .cols { display: grid; color: #5d6b7b; position: relative; flex: none; }
  .cell { display: flex; align-items: center; border-left: 1px solid #e3e3e3; padding-left: 4px; }
  .cell:first-child { border-left: 0; }
  .cols em { position: absolute; top: -3px; }
  .row { display: grid; align-items: center; color: #777; }
  .row > div { display: flex; align-items: center; }
  .row .black { color: #222; }
  .dlist .cols { height: 21px; grid-template-columns: 228px 121px 101px 44px; }
  .dlist .cell:first-child { padding-left: 15px; }
  .dlist .cols em { left: 115px; }
  .dlist .row { height: 20px; grid-template-columns: 233px 121px 100px; margin-top: 5px; }
  .dlist .row > div:first-child { padding-left: 17px; gap: 7px; }
  .hscroll { height: 13px; background: #f0f0f0; display: flex; align-items: center; flex: none; justify-content: space-between; }
  .hscroll i { height: 13px; background: #cdcdcd; }
  .dlist .hscroll { margin: auto 0 1px; padding: 0 3px 0 3px; }
  .dlist .hscroll i { width: 444px; margin: 0 auto 0 4px; }
  .dfoot { flex: 1; background: #efefef; padding: 9px 4px 0 0; position: relative; }
  .field { display: flex; align-items: center; height: 19px; margin-bottom: 2px; }
  .field label { width: 105px; display: flex; justify-content: flex-end; padding-right: 4px; box-sizing: border-box; }
  .input { flex: 1; height: 19px; border: 1px solid #2f88b5; background: #fff; display: flex; align-items: center; padding-left: 3px; }
  .input mark { background: #0b74c8; color: #e6f3ff; line-height: 13px; height: 13px; display: flex; }
  .drop { margin-left: auto; padding-right: 2px; }
  .combo { background: #e2e2e2; border-color: #b5b8ba; padding-left: 1.500px; }
  .dactions { display: flex; align-items: center; height: 26px; margin-top: 20px; padding: 0 10px 0 9px; gap: 6px; }
  .dactions > .t { margin-top: 1px; margin-right: auto; margin-left: -1px; }
  .dactions button { width: 73px; height: 21px; border: 1px solid #b3b3b3; background: #e2e2e2; color: #222; margin: -4px 0 0 5px; }
  .dactions button.primary { border: 2px solid #0f6da6; margin-left: 0; }
  .grip { position: absolute; right: 1px; bottom: 1px; }

  .explorer { position: absolute; left: 798px; top: 30px; width: 392px; height: 585px; background: #fff; display: flex; flex-direction: column; box-shadow: 0 0 5px rgba(0, 15, 60, .75); overflow: hidden; }
  .etitle { height: 25px; display: flex; align-items: center; padding-left: 6px; color: #a0a0a0; flex: none; }
  .etitle i { width: 1px; height: 10px; background: #aaa; margin: 0 9px 0 2px; }
  .etitle > :global(svg:nth-child(3)) { margin-right: 7px; }
  .etitle > :global(svg:nth-child(4)) { margin-right: 8px; }
  .etitle > :global(svg:nth-child(1)) { margin-right: 2px; }
  .etitle i:nth-of-type(2) { margin: 0 5px 0 8px; }
  .wbtns { margin-left: auto; display: flex; gap: 30px; padding-right: 16px; }
  .etabs { height: 19px; display: flex; flex: none; font-size: 8.800px; line-height: 19px; color: #444; }
  .filetab { width: 47px; background: #a5006d; color: #f7d9ec; text-align: center; }
  .home { width: 46px; background: #f1f4f6; border: 1px solid #e0e4e7; border-bottom: 0; text-align: center; line-height: 17px; }
  .share { padding-left: 12px; }
  .viewtab { padding-left: 24px; }
  .ehelp { margin-left: auto; display: flex; align-items: center; gap: 9px; padding-right: 2px; }
  .ribbon { height: 76px; background: #f1f4f6; border-bottom: 1px solid #dfe3e6; display: flex; flex: none; font-size: 8.900px; line-height: 11.500px; color: #333; }
  .group { border-right: 1px solid #e0e5e8; display: flex; flex-direction: column; flex: none; }
  .items { height: 62px; display: flex; padding-top: 3px; }
  .gl { text-align: center; color: #555; }
  .big { display: flex; flex-direction: column; align-items: center; }
  .big > .t { margin-top: 1px; margin-bottom: -1px; }
  .dim { color: #777; }
  .clip { width: 144px; }
  .pin { width: 58px; }
  .copy { width: 25px; }
  .paste { width: 43px; }
  .smalls { display: flex; flex-direction: column; gap: 6px; align-items: center; padding-top: 3px; width: 8px; }
  .org { width: 62px; }
  .quad { display: grid; grid-template-columns: 28px 26px; grid-template-rows: 24px 24px; padding: 7px 0 0 7px; }
  .quad span { display: flex; align-items: center; gap: 1px; }
  .quad span:nth-child(2) { gap: 5px; }
  .new { width: 65px; }
  .new .big { width: 36px; padding-left: 2px; }
  .stack { display: flex; flex-direction: column; padding: 2px 0 0 3px; gap: 5px; }
  .stack span { display: flex; align-items: center; gap: 1px; }
  .open { width: 79px; }
  .open .big { width: 49px; }
  .three { gap: 5px; padding-left: 3px; padding-top: 4px; }
  .three span { gap: 4px; }
  .cc { margin-top: 5px; }
  .new .gl { padding-right: 3px; }
  .open .gl { padding-right: 4px; }
  .select { width: 33px; border: 1px solid #d2e4ed; background: #edf3f7; align-items: center; height: 74px; }
  .selbox { width: 25px; height: 26px; border: 1px solid #c0ddeb; display: flex; align-items: center; justify-content: center; background: #f0f8fc; margin: 3px 0 4px; padding-bottom: 3px; }
  .select .cc { margin-top: 4px; }
  .enav { height: 31px; padding-top: 4px; }
  .enav .nav { width: 90px; padding-left: 11px; height: 26px; }
  .enav .address { width: 192px; height: 26px; padding-left: 1px; }
  .enav .address b { width: 5px; }
  .enav .address .end { padding: 0 0 0 1px; }
  .enav .address .reload { width: 27px; }
  .enav .search { margin-left: 7px; flex: none; width: 130px; height: 26px; padding-left: 11px; }
  .elist { flex: 1; }
  .elist .cols { height: 26px; margin-bottom: 5px; grid-template-columns: 227px 100px 65px; }
  .elist .cell { padding-left: 5px; padding-top: 4px; }
  .elist .cell:first-child { padding-left: 14px; }
  .elist .cols em { left: 114px; top: 2px; }
  .elist .row { height: 18px; margin-left: 12px; grid-template-columns: 221px 100px 59px; }
  .elist .row > div:first-child { padding-left: 5px; gap: 5px; }
  .explorer > .hscroll { padding: 0 4px 0 3px; }
  .explorer > .hscroll i { width: 282px; margin: 0 auto 0 3px; }
  .status { height: 20px; flex: none; display: flex; align-items: center; padding-left: 11.500px; color: #3b4858; }
  .status .t:nth-child(2) { margin: 0 6px 0 17px; }
  .mode { width: 19px; height: 20px; display: flex; align-items: center; justify-content: center; }
  .mode.on { margin-left: auto; background: #d2edf7; border: 1px solid #7abbd6; }
  .mode:last-child { margin-right: 4px; }

  .glow { position: absolute; left: 56px; top: 208px; width: 34px; height: 34px; border-radius: 50%; background: radial-gradient(circle, rgba(240, 240, 60, .85) 25%, rgba(244, 242, 90, .65) 48%, rgba(248, 246, 130, 0) 72%); }
  .hand { position: absolute; left: 68px; top: 224px; display: block; }
</style>
